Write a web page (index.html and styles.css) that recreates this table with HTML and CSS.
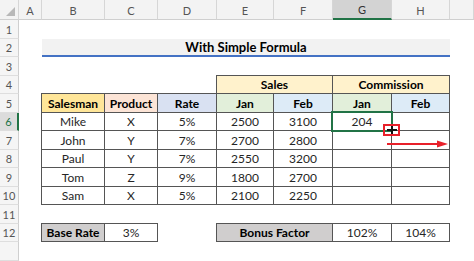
FILE: index.html
```html
<!DOCTYPE html>
<html>
<head>
<meta charset="utf-8">
<link rel="stylesheet" href="styles.css">
</head>
<body>
<div class="sheet">
  <div class="corner ch"><span class="tri"></span></div>
  <div class="ch">A</div><div class="ch">B</div><div class="ch">C</div><div class="ch">D</div>
  <div class="ch">E</div><div class="ch">F</div><div class="ch sel">G</div><div class="ch">H</div><div class="ch"></div>

  <div class="rh r1">1</div><div class="rh r2">2</div><div class="rh r3">3</div><div class="rh r4">4</div>
  <div class="rh r5">5</div><div class="rh r6 rsel">6</div><div class="rh r7">7</div><div class="rh r8">8</div>
  <div class="rh r9">9</div><div class="rh r10">10</div><div class="rh r11">11</div><div class="rh r12">12</div>
  <div class="rh r13"></div>

  <div class="title">With Simple Formula</div>

  <div class="c b head4 cE cF r4">Sales</div>
  <div class="c b head4 cG cH r4">Commission</div>

  <div class="c b r5 cB yellow">Salesman</div>
  <div class="c b r5 cC peach">Product</div>
  <div class="c b r5 cD blue">Rate</div>
  <div class="c b r5 cE green">Jan</div>
  <div class="c b r5 cF lblue">Feb</div>
  <div class="c b r5 cG green">Jan</div>
  <div class="c b r5 cH lblue">Feb</div>

  <div class="c r6 cB">Mike</div><div class="c r6 cC">X</div><div class="c r6 cD">5%</div><div class="c r6 cE">2500</div><div class="c r6 cF">3100</div><div class="c r6 cG active">204</div><div class="c r6 cH"></div>
  <div class="c r7 cB">John</div><div class="c r7 cC">Y</div><div class="c r7 cD">7%</div><div class="c r7 cE">2700</div><div class="c r7 cF">2800</div><div class="c r7 cG"></div><div class="c r7 cH"></div>
  <div class="c r8 cB">Paul</div><div class="c r8 cC">Y</div><div class="c r8 cD">7%</div><div class="c r8 cE">2550</div><div class="c r8 cF">3200</div><div class="c r8 cG"></div><div class="c r8 cH"></div>
  <div class="c r9 cB">Tom</div><div class="c r9 cC">Z</div><div class="c r9 cD">9%</div><div class="c r9 cE">1800</div><div class="c r9 cF">2700</div><div class="c r9 cG"></div><div class="c r9 cH"></div>
  <div class="c r10 cB">Sam</div><div class="c r10 cC">X</div><div class="c r10 cD">5%</div><div class="c r10 cE">2100</div><div class="c r10 cF">2250</div><div class="c r10 cG"></div><div class="c r10 cH"></div>

  <div class="c b r12 cB gray">Base Rate</div>
  <div class="c r12 cC">3%</div>
  <div class="c b r12 cE cF gray">Bonus Factor</div>
  <div class="c r12 cG">102%</div>
  <div class="c r12 cH">104%</div>

  <div class="handle"><span class="ph"></span><span class="pv"></span></div>
  <svg class="arrow" width="62" height="10" viewBox="0 0 62 10">
    <line x1="0" y1="5" x2="52" y2="5" stroke="#e8202a" stroke-width="2"/>
    <polygon points="50,1.5 61,5 50,8.5" fill="#e8202a"/>
  </svg>
</div>
</body>
</html>
```

FILE: styles.css
```css
* { box-sizing: border-box; }
html, body { margin: 0; padding: 0; background: #fff; }
body { width: 474px; height: 261px; overflow: hidden; font-family: Lato, "Open Sans", sans-serif; }

.sheet {
  position: relative;
  display: grid;
  grid-template-columns: 19px 23px 63px 53px 59px 57px 59px 59px 58px 24px;
  grid-template-rows: 20px 19px 18px 19px 18px 19px 18px 19px 18px 19px 18px 19px 18px 19px;
  width: 474px;
  height: 261px;
}

.ch {
  grid-row: 1;
  background: #f3f3f3;
  border-right: 1px solid #d6d6d6;
  border-bottom: 1px solid #cfcfcf;
  color: #555;
  font-size: 11px;
  display: flex;
  align-items: center;
  justify-content: center;
  padding-top: 1px;
}
.ch.sel { background: #d3d3d3; border-bottom: 2px solid #217346; color: #333; }
.corner { position: relative; }
.tri {
  position: absolute;
  right: 3px; bottom: 3px;
  width: 0; height: 0;
  border-left: 9px solid transparent;
  border-bottom: 9px solid #b8b8b8;
}

.rh {
  grid-column: 1;
  background: #f5f5f5;
  border-right: 1px solid #cfcfcf;
  border-bottom: 1px solid #dedede;
  color: #555;
  font-size: 11px;
  display: flex;
  align-items: center;
  justify-content: center;
}
.rh.rsel { background: #dcdcdc; border-right: 2px solid #217346; color: #217346; }

.r1 { grid-row: 2; } .r2 { grid-row: 3; } .r3 { grid-row: 4; } .r4 { grid-row: 5; }
.r5 { grid-row: 6; } .r6 { grid-row: 7; } .r7 { grid-row: 8; } .r8 { grid-row: 9; }
.r9 { grid-row: 10; } .r10 { grid-row: 11; } .r11 { grid-row: 12; } .r12 { grid-row: 13; }
.r13 { grid-row: 14; }

.cB { grid-column: 3; } .cC { grid-column: 4; } .cD { grid-column: 5; }
.cE { grid-column: 6; } .cF { grid-column: 7; } .cG { grid-column: 8; } .cH { grid-column: 9; }
.cE.cF { grid-column: 6 / 8; }
.cG.cH { grid-column: 8 / 10; }

.title {
  grid-row: 3;
  grid-column: 3 / 10;
  background: #f2f2f2;
  border-bottom: 2px solid #4472c4;
  font-weight: 700;
  font-size: 13px;
  color: #000;
  display: flex;
  align-items: center;
  justify-content: center;
}

.c {
  border: 1px solid #555;
  margin: -1px 0 0 -1px;
  display: flex;
  align-items: center;
  justify-content: center;
  font-size: 12px;
  color: #262626;
  background: #fff;
}
.c.b { font-weight: 700; color: #000; }

.head4 { background: #fff2cc; }
.yellow { background: #ffe699; }
.peach { background: #fce4d6; }
.blue { background: #d9e1f2; }
.green { background: #e2efda; }
.lblue { background: #ddebf7; }
.gray { background: #d0cece; }

.active {
  position: relative;
  z-index: 2;
  outline: 2px solid #217346;
  outline-offset: -1px;
}

.handle {
  position: absolute;
  left: 383px;
  top: 124px;
  width: 17px;
  height: 12px;
  border: 2px solid #e8202a;
  z-index: 3;
}
.ph {
  position: absolute;
  left: 2px; top: 3px;
  width: 10px; height: 2px;
  background: #111;
}
.pv {
  position: absolute;
  left: 6px; top: 0;
  width: 2px; height: 8px;
  background: #111;
}
.arrow {
  position: absolute;
  left: 387px;
  top: 139px;
  z-index: 3;
}
```
